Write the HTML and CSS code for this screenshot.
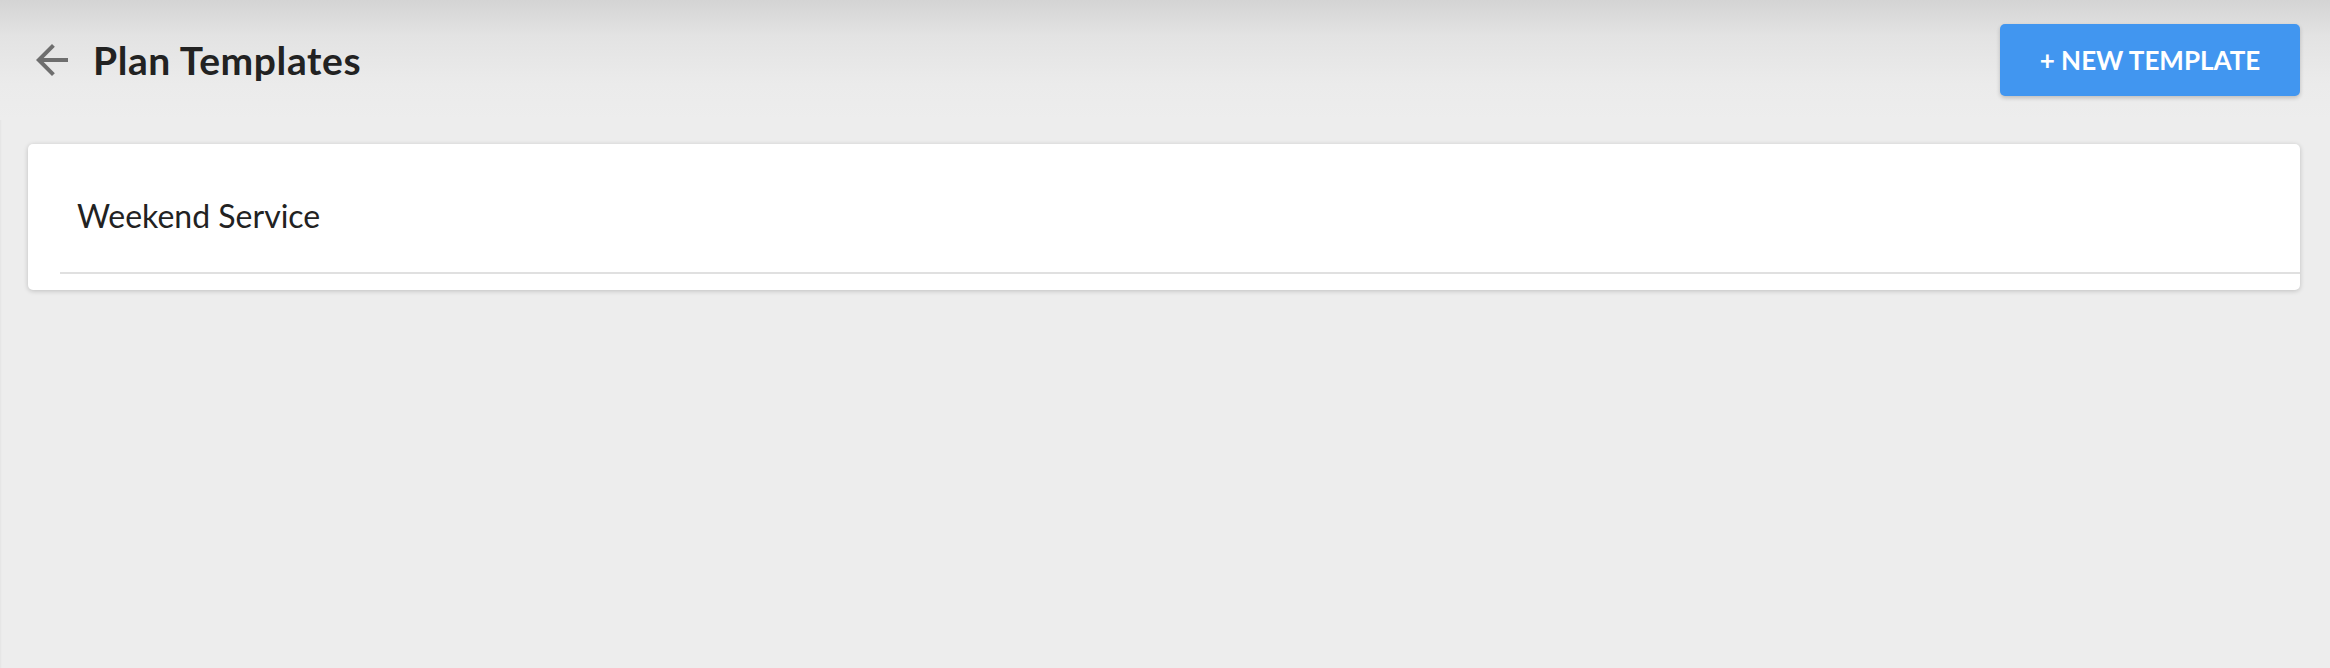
FILE: index.html
```html
<!DOCTYPE html>
<html lang="en">
<head>
    <meta charset="UTF-8">
    <meta name="viewport" content="width=device-width, initial-scale=1.0">
    <title>Plan Templates</title>
    <link rel="stylesheet" href="styles.css">
</head>
<body>
    <!-- Page header -->
    <div class="page-header">
        <a class="back-link" href="#">
            <svg viewBox="0 0 24 24" width="48" height="48"><path d="M20 11H7.83l5.59-5.59L12 4l-8 8 8 8 1.41-1.41L7.83 13H20v-2z"/></svg>
        </a>
        <h1 class="page-title">Plan Templates</h1>
        <button class="new-button">+ NEW TEMPLATE</button>
    </div>

    <!-- Template list -->
    <div class="template-card">
        <div class="template-item">Weekend Service</div>
    </div>
</body>
</html>
```

FILE: styles.css
```css
html, body {
    margin: 0;
    height: 100%;
}
body {
    font-family: Lato, "Open Sans", Arial, sans-serif;
    background-color: #ededed;
    color: #222;
    box-shadow: inset 3px 0 2px -2px rgba(0, 0, 0, 0.04);
}
.page-header {
    display: flex;
    align-items: center;
    height: 120px;
    padding: 0 30px 0 28px;
    background: linear-gradient(#d4d4d4, #e3e3e3 30%, #ebebeb 70%, #ededed);
}
.back-link {
    display: flex;
    width: 48px;
    height: 48px;
    fill: #6e6e6e;
}
.page-title {
    flex: 1;
    margin: 0 0 0 17px;
    font-size: 39px;
    font-weight: 700;
    letter-spacing: 0.6px;
    color: #222;
}
.new-button {
    width: 300px;
    height: 72px;
    border: none;
    border-radius: 5px;
    background-color: #4196f0;
    color: #fff;
    font-family: inherit;
    font-size: 26px;
    font-weight: 700;
    box-shadow: 0 2px 4px rgba(0, 0, 0, 0.2);
}
.template-card {
    margin: 24px 30px 0 28px;
    padding-bottom: 16px;
    background-color: #fff;
    border-radius: 5px;
    box-shadow: 0 1px 5px rgba(0, 0, 0, 0.2);
}
.template-item {
    display: flex;
    align-items: center;
    height: 130px;
    margin-left: 32px;
    padding-left: 17px;
    box-sizing: border-box;
    padding-top: 14px;
    border-bottom: 2px solid #e0e0e0;
    font-size: 32px;
}
```
